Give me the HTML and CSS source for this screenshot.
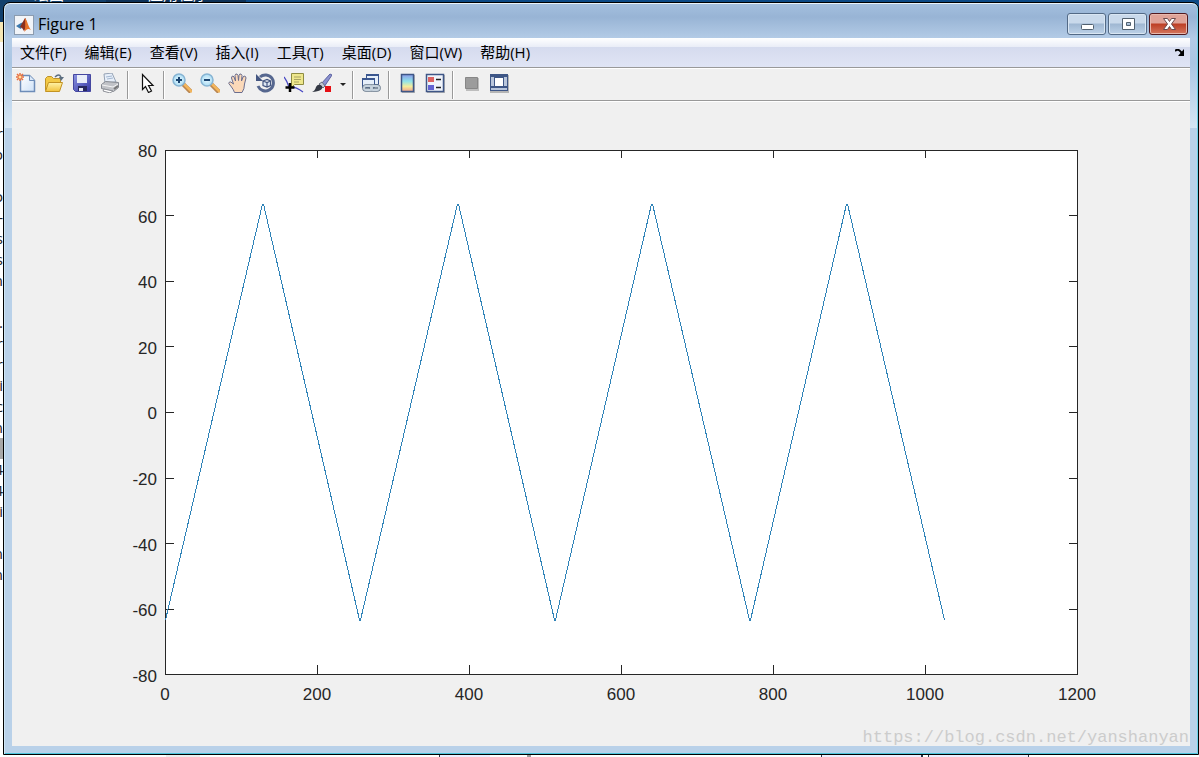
FILE: index.html
```html
<!DOCTYPE html>
<html lang="zh-CN">
<head>
  <meta charset="UTF-8">
  <meta name="viewport" content="width=device-width, initial-scale=1.0">
  <title>Figure 1</title>
  <link rel="stylesheet" href="styles.css">
</head>
<body>
  <!-- main window behind the figure -->
  <div class="backdrop" aria-hidden="true">
    <div class="tabs"><span>绘图</span><span>应用程序</span></div>
    <div class="ribbon"></div>
    <div class="code">
      <div>r</div><div>p</div><div></div><div>o</div><div>-</div><div>s</div><div>s</div><div>n</div><div></div>
      <div>.</div><div>r</div><div>r</div><div>i</div><div>c</div><div>n</div><div class="selected"></div><div>4</div>
      <div>4</div><div>i</div><div></div><div>n</div><div>n</div>
    </div>
    <div class="status"></div>
  </div>

  <div class="window">
    <header class="titlebar">
      <svg class="logo" viewBox="0 0 20 20">
        <rect x=".5" y=".5" width="19" height="19" fill="#f1f4f8" stroke="#8c9caf"/>
        <path d="M2 11l5-3 3-1-3 7-2-1z" fill="#3c78ac"/>
        <path d="M6 12l5-9c1 0 2 5 2 8l-3 5-2-3z" fill="#8c2f1c"/>
        <path d="M11 3c2 2 3 8 6 12-3-2-4-1-7 2 2-4 1-9 1-14z" fill="#e8732a"/>
      </svg>
      <h1>Figure 1</h1>
      <div class="controls">
        <button type="button" aria-label="最小化">
          <svg viewBox="0 0 20 20"><rect x="4.500" y="10.500" width="12" height="5" rx="1" fill="#fff" stroke="#51606f"/></svg>
        </button>
        <button type="button" aria-label="最大化">
          <svg viewBox="0 0 20 20"><path d="M4.500 4.500h12v11h-12zM8.500 8.500v3h4v-3z" fill="#fff" fill-rule="evenodd" stroke="#51606f"/></svg>
        </button>
        <button type="button" class="close" aria-label="关闭">
          <svg viewBox="0 0 20 20"><path d="M4.500 4.500h4l2 3 2-3h4l-4 5.500 4 5.500h-4l-2-3-2 3h-4l4-5.500z" fill="#fff" stroke="#6b4a4d"/></svg>
        </button>
      </div>
    </header>

    <nav class="menubar">
      <button type="button">文件(F)</button>
      <button type="button">编辑(E)</button>
      <button type="button">查看(V)</button>
      <button type="button">插入(I)</button>
      <button type="button">工具(T)</button>
      <button type="button">桌面(D)</button>
      <button type="button">窗口(W)</button>
      <button type="button">帮助(H)</button>
      <button type="button" class="dock" aria-label="停靠">
        <svg viewBox="0 0 10 8"><path d="M0 2q3-3 6 1l1 1" fill="none" stroke="#000" stroke-width="2"/><path d="M9 0v7H3z"/></svg>
      </button>
    </nav>

    <div class="toolbar">
      <button type="button" aria-label="新建">
        <svg viewBox="0 0 20 20">
          <path d="M4.500 2.500h9l5 5v11h-14z" fill="url(#page)" stroke="#6d8cb8" stroke-width="1.500"/>
          <path d="M13.500 2.500v5h5" fill="#dce9f8" stroke="#6d8cb8"/>
          <path d="M4 0v8M0 4h8M1 1l6 6M7 1L1 7" stroke="#e9703f" stroke-width="1.500"/><circle cx="4" cy="4" r="1.500" fill="#ffe0a0"/>
        </svg>
      </button>
      <button type="button" aria-label="打开">
        <svg viewBox="0 0 20 20">
          <path d="M1.500 17.500v-12l2-2h4l2 2h7v5" fill="#f3c945" stroke="#bd922a"/>
          <path d="M1.500 18.500l3-9h14l-3 9z" fill="url(#folder)" stroke="#c39322"/>
          <path d="M11 4q4-4 6 0" fill="none" stroke="#5c6e80" stroke-width="1.500"/><path d="M15 4h5l-3 4z" fill="#5c6e80"/>
        </svg>
      </button>
      <button type="button" aria-label="保存">
        <svg viewBox="0 0 20 20">
          <path d="M1.500 1.500h17v17h-15l-2-2z" fill="url(#disk)" stroke="#4547a0"/>
          <path d="M5 2h10v8H5z" fill="#e9eef9"/><path d="M6 13h9v5H6z" fill="#26285f"/><path d="M7 15h4v3H7z" fill="#e6e9f4"/>
        </svg>
      </button>
      <button type="button" aria-label="打印">
        <svg viewBox="0 0 20 20">
          <path d="M5 10L4 1l8-1 4 9z" fill="#e7effa" stroke="#95a2b4"/>
          <path d="M6 4l6-1M7 6l6-1" stroke="#a3b7d0"/>
          <path d="M1.500 11.500l4-3 13 1v5l-5 4-12-3z" fill="#c1c3c8" stroke="#858991"/>
          <path d="M2 12l11 2 5-3" fill="none" stroke="#f4f4f4"/><path d="M4 16l9 2-3 2-7-2z" fill="#fff" stroke="#8d9097"/><path d="M14 16l4-3" stroke="#777" stroke-width="2"/>
        </svg>
      </button>
      <span class="sep"></span>
      <button type="button" aria-label="编辑绘图">
        <svg viewBox="0 0 20 20"><path d="M6.500 1.500v15l3-3 3 6 3-1.500-3-5.500h4.500z" fill="#fff" stroke="#111" stroke-width="1.200"/></svg>
      </button>
      <span class="sep"></span>
      <button type="button" aria-label="放大">
        <svg viewBox="0 0 20 20">
          <path d="M11 11l8 8" stroke="#b98550" stroke-width="4.500"/><path d="M12 11l8 8" stroke="#f3b65c" stroke-width="2.500"/>
          <circle cx="7" cy="7" r="6" fill="url(#lens)" stroke="#87b4d3" stroke-width="1.500"/>
          <path d="M7 4v6M4 7h6" stroke="#1b4571" stroke-width="2"/>
        </svg>
      </button>
      <button type="button" aria-label="缩小">
        <svg viewBox="0 0 20 20">
          <path d="M11 11l8 8" stroke="#b98550" stroke-width="4.500"/><path d="M12 11l8 8" stroke="#f3b65c" stroke-width="2.500"/>
          <circle cx="7" cy="7" r="6" fill="url(#lens)" stroke="#87b4d3" stroke-width="1.500"/>
          <path d="M4 7h6" stroke="#1b4571" stroke-width="2"/>
        </svg>
      </button>
      <button type="button" aria-label="平移">
        <svg viewBox="0 0 20 20">
          <path d="M6.500 19.500q-1-3-3-5.500L.8 10.500q0-2 2-1.500l2.700 2L3.500 5q0-2 1.500-2l1 1 1.500 4L7 2.500Q7.500.5 9 1l1 1.500.5 5 .5-5q.5-2 2-1.500l1 1.500-.5 5.500 1.500-4q1-1.500 2.500-.5l.5 1.500-1.500 6q0 5-2.500 8.500z" fill="#fbd9b9" stroke="#6a6d8e"/>
        </svg>
      </button>
      <button type="button" aria-label="三维旋转">
        <svg viewBox="0 0 20 20">
          <path d="M4 4a8 8 0 1 1-2 9" fill="none" stroke="#56678f" stroke-width="3"/>
          <path d="M0 1v7h7z" fill="#445681"/>
          <path d="M7 8l4-1.500L14.500 8v4.500L11 14l-4-1.500zM7 8l4 1.500L14.500 8M11 9.500V14" fill="#dfe9f5" stroke="#445681" stroke-width="1.200"/>
        </svg>
      </button>
      <button type="button" aria-label="数据游标">
        <svg viewBox="0 0 20 20">
          <path d="M0 4q3 4 5 10 6-1 14 5" fill="none" stroke="#4747c4" stroke-width="1.300"/>
          <path d="M7.500.5h12v11h-9l-3 3z" fill="#eee78c" stroke="#8e8c42"/>
          <path d="M10 4h7M10 6.500h7M10 9h5" stroke="#a9a362"/>
          <path d="M6 10v9M1.500 14.500h9" stroke="#000" stroke-width="2.500"/>
        </svg>
      </button>
      <button type="button" aria-label="刷亮">
        <svg viewBox="0 0 20 20">
          <path d="M9 11l9-10 2 1-8 12z" fill="#8b92cf" stroke="#5a60a0"/>
          <path d="M7 11l3-2 3 4-2 2z" fill="#c3c9d4" stroke="#6a7180"/>
          <path d="M0 19q3-1 4-5 2-4 6-1 2 5-10 6z" fill="#343944"/>
          <path d="M13 13h6v6h-6z" fill="#e60f14"/>
        </svg>
      </button>
      <button type="button" class="caret" aria-label="刷亮选项"></button>
      <span class="sep"></span>
      <button type="button" aria-label="链接绘图">
        <svg viewBox="0 0 20 20">
          <path d="M5.500 1.500h12v10h-12z" fill="#e6effa" stroke="#3a568f"/><path d="M5 1h13v2H5z" fill="#3a568f"/>
          <path d="M1.500 5.500h12v9h-12z" fill="#e6effa" stroke="#3a568f"/><path d="M1 5h13v2H1z" fill="#3a568f"/>
          <g fill="none" stroke="#667789" stroke-width="3.500"><rect x="3" y="13" width="8" height="4" rx="2"/><rect x="10" y="13" width="8" height="4" rx="2"/></g>
          <g fill="none" stroke="#c6d2dd" stroke-width="2"><rect x="3" y="13" width="8" height="4" rx="2"/><rect x="10" y="13" width="8" height="4" rx="2"/></g>
        </svg>
      </button>
      <span class="sep"></span>
      <button type="button" aria-label="插入颜色栏">
        <svg viewBox="0 0 20 20"><path d="M5 2h13v18H5z" fill="#b5b5b5"/><path d="M4.500 1.500h12v17h-12z" fill="url(#bar)" stroke="#3e5686" stroke-width="1.500"/></svg>
      </button>
      <button type="button" aria-label="插入图例">
        <svg viewBox="0 0 20 20">
          <path d="M2 2h18v18H2z" fill="#b5b5b5"/><path d="M1.500 1.500h17v17h-17z" fill="#f0f4fb" stroke="#3e5686" stroke-width="1.500"/>
          <path d="M3 4h6v5H3z" fill="#dc6262"/><path d="M3 12h6v5H3z" fill="#6363d2"/><path d="M11 6.500h5M11 14.500h5" stroke="#222" stroke-width="1.500"/>
        </svg>
      </button>
      <span class="sep"></span>
      <button type="button" aria-label="隐藏绘图工具">
        <svg viewBox="0 0 20 20"><path d="M5 5h13v13H5z" fill="#bdbdbd"/><path d="M4.500 4.500h12v11h-12z" fill="#9c9c9c" stroke="#878787"/></svg>
      </button>
      <button type="button" aria-label="显示绘图工具">
        <svg viewBox="0 0 20 20">
          <path d="M1 2h19v18H1z" fill="#b5b5b5"/><path d="M1 1h18v17H1z" fill="#3e5686"/><path d="M2 4h3v9H2zM15 4h3v9h-3zM2 15h16v2H2z" fill="#b9c6dc"/><path d="M6 5h8v8H6z" fill="#fff"/>
        </svg>
      </button>
    </div>

    <main class="figure">
      <svg class="plot" viewBox="0 0 1178 644" role="img" aria-label="三角波">
        <g transform="translate(153.500 48.500)">
          <rect class="axes" width="912" height="524"/>
          <path class="axes" d="M152 0v8M304 0v8M456 0v8M608 0v8M760 0v8M152 524v-9M304 524v-9M456 524v-9M608 524v-9M760 524v-9"/>
          <path class="axes" d="M0 65h8M0 131h8M0 196h8M0 262h8M0 328h8M0 393h8M0 459h8M912 65h-9M912 131h-9M912 196h-9M912 262h-9M912 328h-9M912 393h-9M912 459h-9"/>
          <polyline class="series" points="0,470 97,54 98,54 194,470 195,470 292,54 293,54 389,470 390,470 486,54 487,54 584,470 585,470 681,54 682,54 779,470"/>
        </g>
        <g class="ylabels">
          <text x="145" y="55">80</text>
          <text x="145" y="121">60</text>
          <text x="145" y="186">40</text>
          <text x="145" y="252">20</text>
          <text x="145" y="317">0</text>
          <text x="145" y="383">-20</text>
          <text x="145" y="449">-40</text>
          <text x="145" y="514">-60</text>
          <text x="145" y="580">-80</text>
        </g>
        <g class="xlabels">
          <text x="153" y="598">0</text>
          <text x="305" y="598">200</text>
          <text x="457" y="598">400</text>
          <text x="609" y="598">600</text>
          <text x="761" y="598">800</text>
          <text x="913" y="598">1000</text>
          <text x="1065" y="598">1200</text>
        </g>
      </svg>
      <p class="watermark">https://blog.csdn.net/yanshanyan</p>
    </main>
  </div>

  <!-- shared icon gradients -->
  <svg class="defs" aria-hidden="true">
    <linearGradient id="page" x2="1" y2="1"><stop stop-color="#fff"/><stop offset="1" stop-color="#cfe2f8"/></linearGradient>
    <linearGradient id="folder" x2="0" y2="1"><stop stop-color="#fff3a8"/><stop offset="1" stop-color="#f2c23c"/></linearGradient>
    <linearGradient id="disk" x2="1" y2="1"><stop stop-color="#8b94e0"/><stop offset="1" stop-color="#3538a6"/></linearGradient>
    <radialGradient id="lens"><stop stop-color="#e6f7ff"/><stop offset="1" stop-color="#aadcf3"/></radialGradient>
    <linearGradient id="bar" x2="0" y2="1"><stop stop-color="#8b9be8"/><stop offset=".4" stop-color="#8fe3ea"/><stop offset=".7" stop-color="#f4ee9c"/><stop offset="1" stop-color="#f0a28c"/></linearGradient>
  </svg>
</body>
</html>
```
FILE: styles.css
```css
* {
  box-sizing: border-box;
}

body {
  margin: 0;
  padding: 2px 0 2px 3px;
  height: 100vh;
  overflow: hidden;
  display: flex;
  background: #fff;
  font-family: "Open Sans", "Noto Sans CJK SC", sans-serif;
  font-size: 15px;
  color: #000;
}

button {
  padding: 0;
  border: none;
  background: none;
  font: inherit;
  color: inherit;
}

svg {
  display: block;
}

/* window behind */
.backdrop {
  position: absolute;
  inset: 0;
  z-index: -1;
  overflow: hidden;
  display: flex;
  flex-direction: column;
}

.tabs {
  height: 22px;
  padding-left: 34px;
  display: flex;
  gap: 84px;
  background: linear-gradient(90deg, #12406c 0 106px, #0d3258 106px 246px, #0c4a86 246px);
  color: #fff;
  line-height: 22px;
}

.tabs span {
  margin-top: -17px;
}

.ribbon {
  height: 101px;
  background: linear-gradient(#f6e7b4 0 20px, #fafafa 20px 80px, #fff 80px);
}

.code {
  width: 3px;
  color: #222;
}

.code div {
  height: 21px;
  line-height: 20px;
  display: flex;
  justify-content: flex-end;
}

.code .selected {
  background: #a8a8a8;
}

.status {
  height: 2px;
  margin-top: auto;
  background: linear-gradient(90deg, #fff 166px, #eee 166px 200px, #fff 200px 439px, #234 439px 440px, #eef 440px 490px, #fff 490px 527px, #999 527px 531px, #fff 531px 821px, #234 821px 822px, #eef 822px 921px, #234 921px 923px, #fff 923px 928px, #234 928px 929px, #eef 929px 1028px, #234 1028px 1029px, #fff 1029px);
}

/* figure window */
.window {
  flex: 1;
  min-width: 0;
  display: flex;
  flex-direction: column;
  padding: 0 8px 8px;
  border: 1px solid #000;
  border-radius: 7px 7px 0 0;
  background: linear-gradient(#a4c0df 0, #98b4d5 14px, #b3cbe6 35px, #aac6e3 60px, #d5e6f5 125px, #b9d1e9 125px);
  box-shadow: inset 0 1px #e9f4fc, inset 1px 0 #cfe6f5, inset -1px 0 #6ad2ea, inset 0 -1px #4cc5dc;
}

.titlebar {
  height: 35px;
  padding: 0 2px;
  display: flex;
  align-items: center;
  gap: 4px;
}

.titlebar h1 {
  flex: 1;
  margin: 7px 0 0;
  font-size: 16px;
  font-weight: 400;
  line-height: 22px;
}

.logo {
  width: 20px;
  height: 20px;
  margin-top: 8px;
}

.controls {
  display: flex;
  gap: 2px;
  margin-top: 6px;
}

.controls button {
  width: 39px;
  height: 22px;
  display: flex;
  align-items: center;
  justify-content: center;
  border: 1px solid #536a86;
  border-radius: 3px;
  background: linear-gradient(#c9d9eb 45%, #9fb7d2 50%, #bdd2e8);
  box-shadow: inset 0 0 0 1px #d9e6f3;
}

.controls .close {
  border-color: #52191e;
  background: linear-gradient(#dfa398 45%, #bd3e24 50%, #d4775f);
  box-shadow: inset 0 0 0 1px #e7b8ad;
}

.controls svg {
  width: 20px;
  height: 20px;
}

.menubar {
  height: 30px;
  display: flex;
  align-items: center;
  gap: 2px;
  border-bottom: 1px solid #999;
  background: linear-gradient(#fff, #e9edf7 9px, #d5dbee 9px, #e0e5f5);
}

.menubar button {
  padding: 0 8px 2px;
  line-height: 24px;
}

.menubar .dock {
  margin-left: auto;
  padding: 0 5px;
}

.dock svg {
  width: 10px;
  height: 8px;
}

.toolbar {
  height: 33px;
  display: flex;
  align-items: center;
  border-top: 1px solid #fff;
  border-bottom: 1px solid #999;
  background: #f0f0f0;
}

.toolbar button {
  width: 28px;
  height: 28px;
  padding: 2px 4px 6px;
}

.toolbar svg {
  width: 20px;
  height: 20px;
}

.toolbar .caret {
  width: 13px;
  padding: 0 4px;
}

.caret::before {
  content: "";
  display: block;
  border: 3px solid transparent;
  border-top-color: #222;
  border-bottom: none;
}

.sep {
  width: 8px;
  height: 28px;
  background: linear-gradient(90deg, transparent 3px, #999 3px 4px, #fff 4px 5px, transparent 5px);
}

.figure {
  position: relative;
  flex: 1;
  min-height: 0;
  background: #f0f0f0;
  box-shadow: inset 0 1px #fff;
}

.plot {
  width: 100%;
  height: 100%;
  font-family: "Liberation Sans", sans-serif;
  font-size: 17px;
  fill: #262626;
}

.axes {
  fill: none;
  stroke: #262626;
  shape-rendering: crispEdges;
}

rect.axes {
  fill: #fff;
}

.series {
  fill: none;
  stroke: #2f83b8;
  shape-rendering: crispEdges;
}

.ylabels {
  text-anchor: end;
}

.xlabels {
  text-anchor: middle;
}

.watermark {
  position: absolute;
  right: 1px;
  bottom: 0;
  margin: 0;
  font-family: "Liberation Mono", monospace;
  font-size: 17px;
  line-height: 16px;
  color: #ccc;
}

.defs {
  position: absolute;
  width: 0;
  height: 0;
}
```
